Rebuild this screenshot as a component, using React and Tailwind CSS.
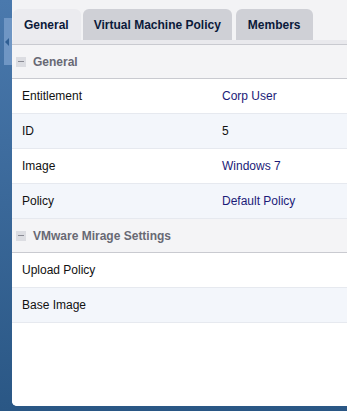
import React from "react";

function SectionHeader({ title }) {
  return (
    <div className="flex h-[34px] items-center border-b border-[#c9cad0] bg-[#f4f4f6] pl-[4px]">
      <div className="flex h-[10px] w-[10px] items-center justify-center bg-[#dcdde2]">
        <div className="h-[1px] w-[6px] bg-[#8a8b94]" />
      </div>
      <span className="ml-[7px] text-[12px] font-bold text-[#686974]">{title}</span>
    </div>
  );
}

function Row({ label, value, alt, valueClass = "text-[#1b1b78]" }) {
  return (
    <div
      className={
        "flex h-[35px] items-center border-b border-[#e6e9ef] text-[12px] " +
        (alt ? "bg-[#f3f6fb]" : "bg-white")
      }
    >
      <span className="w-[210px] pl-[10px] text-[#111]">{label}</span>
      <span className={valueClass}>{value}</span>
    </div>
  );
}

export default function App() {
  return (
    <div
      className="flex h-[411px] w-[347px] overflow-hidden bg-gradient-to-b from-[#4a79ad] to-[#2a5785]"
      style={{ fontFamily: '"Liberation Sans", Arial, sans-serif' }}
    >
      <div className="flex w-[12px] shrink-0 flex-col pt-[18px]">
        <div className="ml-[4px] flex h-[47px] w-[8px] items-center bg-[#6f96c4]">
          <div className="ml-[1px] h-0 w-0 border-y-[4px] border-r-[4px] border-y-transparent border-r-[#2f5f94]" />
        </div>
      </div>
      <div className="mb-[5px] flex flex-1 flex-col overflow-hidden rounded-bl-[5px] bg-white">
        <div className="flex h-[40px] shrink-0 items-end gap-[2px] bg-[#f3f3f5] pl-[1px]">
          <div className="flex h-[31px] items-center rounded-t-[6px] bg-[#ebebef] pl-[11px] pr-[12px] text-[12px] font-bold text-[#0b1a3a]">
            General
          </div>
          <div className="flex h-[31px] items-center rounded-t-[6px] bg-[#cfd0d6] px-[11px] text-[12px] font-bold text-[#0b1a3a]">
            Virtual Machine Policy
          </div>
          <div className="ml-[2px] flex h-[31px] items-center rounded-t-[6px] bg-[#cfd0d6] px-[12px] text-[12px] font-bold text-[#0b1a3a]">
            Members
          </div>
        </div>
        <div className="h-[5px] shrink-0 border-b border-[#c9cad0] bg-[#e9e9ed]" />
        <SectionHeader title="General" />
        <Row label="Entitlement" value="Corp User" />
        <Row label="ID" value="5" alt valueClass="text-[#111]" />
        <Row label="Image" value="Windows 7" />
        <Row label="Policy" value="Default Policy" alt />
        <SectionHeader title="VMware Mirage Settings" />
        <Row label="Upload Policy" value="" />
        <Row label="Base Image" value="" alt />
        <div className="flex-1 bg-white" />
      </div>
    </div>
  );
}
